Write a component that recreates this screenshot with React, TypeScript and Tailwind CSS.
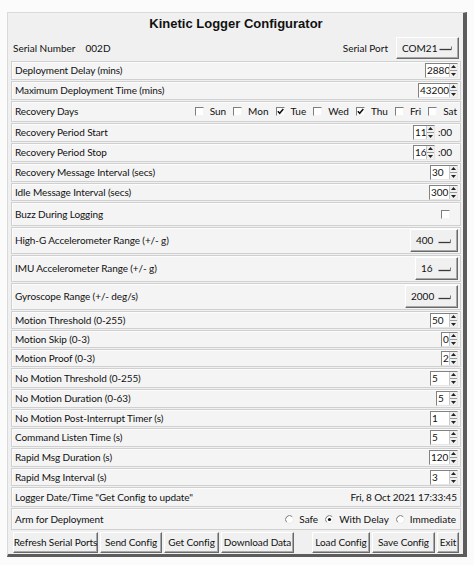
import React from 'react'

const font = { fontFamily: 'Lato, "Noto Sans", sans-serif' }

function Spin({ value, w, suffix }: { value: string; w: string; suffix?: boolean }) {
  return (
    <div className="flex items-center">
      <div className="flex h-[15px] items-stretch bg-white border border-t-[#828282] border-l-[#828282] border-r-[#e6e6e6] border-b-[#e6e6e6]">
        <span className={`${w} pl-[1px] text-[10px] leading-[13px] text-[#111] overflow-hidden`}>{value}</span>
        <div className="flex w-[8px] flex-col justify-center gap-[1px] bg-[#f0f0f0] border-l border-[#c8c8c8]">
          <svg width="7" height="5" viewBox="0 0 7 5" className="mx-auto">
            <path d="M1 4 L3.5 1 L6 4 Z" fill="#222" />
          </svg>
          <div className="h-px bg-[#9a9a9a]" />
          <svg width="7" height="5" viewBox="0 0 7 5" className="mx-auto">
            <path d="M1 1 L3.5 4 L6 1 Z" fill="#222" />
          </svg>
        </div>
      </div>
      {suffix && <span className="ml-[3px] w-[20px] text-[10px] text-[#111]">:00</span>}
    </div>
  )
}

function Indicator() {
  return (
    <svg width="14" height="6" viewBox="0 0 14 6">
      <path d="M0.5 4.5 H12.5" stroke="#3a3a3a" strokeWidth="1.3" />
      <path d="M12.5 1.5 V4.5" stroke="#7a7a7a" strokeWidth="1" />
    </svg>
  )
}

function OptionBtn({ label, w, h }: { label: string; w: string; h: string }) {
  return (
    <div
      className={`${w} ${h} flex items-center justify-between pl-[5px] pr-[5px] bg-[#f0f0f0] border border-t-white border-l-white border-r-[#6a6a6a] border-b-[#6a6a6a] shadow-[inset_-1px_-1px_0_#a8a8a8] text-[10px] text-[#111]`}
    >
      <span>{label}</span>
      <Indicator />
    </div>
  )
}

function Check({ checked }: { checked?: boolean }) {
  return (
    <div className="relative h-[9px] w-[9px] bg-white border border-t-[#7e7e7e] border-l-[#7e7e7e] border-r-[#f4f4f4] border-b-[#f4f4f4]">
      {checked && (
        <svg width="7" height="7" viewBox="0 0 7 7" className="absolute left-0 top-0">
          <path d="M0.8 3.2 L2.7 5.3 L6.3 1" stroke="#111" strokeWidth="1.5" fill="none" />
        </svg>
      )}
    </div>
  )
}

function Radio({ on }: { on?: boolean }) {
  return (
    <svg width="9" height="9" viewBox="0 0 10 10">
      <circle cx="5" cy="5" r="4.3" fill="#fff" />
      <path d="M1.9 8.1 A4.3 4.3 0 0 1 8.1 1.9" stroke="#7a7a7a" strokeWidth="1.1" fill="none" />
      <path d="M8.1 1.9 A4.3 4.3 0 0 1 1.9 8.1" stroke="#e8e8e8" strokeWidth="1" fill="none" />
      {on && <circle cx="5" cy="5" r="1.8" fill="#111" />}
    </svg>
  )
}

function Row({ label, h, children }: { label: string; h: string; children?: React.ReactNode }) {
  return (
    <div
      className={`${h} flex items-center justify-between border border-[#d0d0d0] bg-[#f4f4f4] shadow-[inset_1px_1px_0_#fcfcfc] pl-[3px] pr-[2px]`}
    >
      <span className="text-[10px] tracking-[-0.1px] text-[#111] whitespace-nowrap">{label}</span>
      {children}
    </div>
  )
}

function Btn({ label, w }: { label: string; w: string }) {
  return (
    <div
      className={`${w} h-[21px] flex items-center justify-center bg-[#f0f0f0] border border-t-white border-l-white border-r-[#6a6a6a] border-b-[#6a6a6a] shadow-[inset_-1px_-1px_0_#a8a8a8] text-[10px] tracking-[-0.1px] text-[#111] whitespace-nowrap`}
    >
      {label}
    </div>
  )
}

const days: [string, boolean][] = [
  ['Sun', false],
  ['Mon', false],
  ['Tue', true],
  ['Wed', false],
  ['Thu', true],
  ['Fri', false],
  ['Sat', false],
]

export default function App() {
  return (
    <div className="min-h-[565px] bg-[#fbfbfb] pt-[12px] pl-[7px]" style={font}>
      <div className="w-[460px] bg-[#f0f0f0] border-l border-t border-[#dadada] border-r-[4px] border-b-[3px] border-r-[#5c5c5c] border-b-[#5c5c5c] pl-[3px] pr-[2px] pb-[1px]">
        <div className="h-[22px] flex items-center justify-center">
          <h1 className="text-[13px] font-bold text-[#111]" style={{ fontFamily: '"Liberation Sans", Arial, sans-serif' }}>
            Kinetic Logger Configurator
          </h1>
        </div>

        <div className="h-[26px] flex items-center justify-between pl-[2px] pr-[2px]">
          <div className="flex items-center gap-[10px] text-[10px] text-[#111]">
            <span>Serial Number</span>
            <span>002D</span>
          </div>
          <div className="flex items-center gap-[8px] text-[10px] text-[#111]">
            <span>Serial Port</span>
            <OptionBtn label="COM21" w="w-[63px]" h="h-[22px]" />
          </div>
        </div>

        <div className="flex flex-col gap-px">
          <Row label="Deployment Delay (mins)" h="h-[19px]">
            <Spin value="2880" w="w-[23px]" />
          </Row>
          <Row label="Maximum Deployment Time (mins)" h="h-[19px]">
            <Spin value="43200" w="w-[30px]" />
          </Row>
          <Row label="Recovery Days" h="h-[21px]">
            <div className="flex items-center text-[10px] text-[#111] mr-[1px]">
              {days.map(([d, c]) => (
                <div key={d} className="flex items-center gap-[6px] ml-[7px]">
                  <Check checked={c} />
                  <span>{d}</span>
                </div>
              ))}
            </div>
          </Row>
          <Row label="Recovery Period Start" h="h-[19px]">
            <Spin value="11" w="w-[12px]" suffix />
          </Row>
          <Row label="Recovery Period Stop" h="h-[19px]">
            <Spin value="16" w="w-[12px]" suffix />
          </Row>
          <Row label="Recovery Message Interval (secs)" h="h-[19px]">
            <Spin value="30" w="w-[18px]" />
          </Row>
          <Row label="Idle Message Interval (secs)" h="h-[18px]">
            <Spin value="300" w="w-[19px]" />
          </Row>
          <Row label="Buzz During Logging" h="h-[24px]">
            <div className="mr-[8px]">
              <Check />
            </div>
          </Row>
          <Row label="High-G Accelerometer Range (+/- g)" h="h-[27px]">
            <OptionBtn label="400" w="w-[48px]" h="h-[23px]" />
          </Row>
          <Row label="IMU Accelerometer Range (+/- g)" h="h-[27px]">
            <OptionBtn label="16" w="w-[43px]" h="h-[23px]" />
          </Row>
          <Row label="Gyroscope Range (+/- deg/s)" h="h-[27px]">
            <OptionBtn label="2000" w="w-[53px]" h="h-[23px]" />
          </Row>
          <Row label="Motion Threshold (0-255)" h="h-[18px]">
            <Spin value="50" w="w-[18px]" />
          </Row>
          <Row label="Motion Skip (0-3)" h="h-[18px]">
            <Spin value="0" w="w-[7px]" />
          </Row>
          <Row label="Motion Proof (0-3)" h="h-[18px]">
            <Spin value="2" w="w-[7px]" />
          </Row>
          <Row label="No Motion Threshold (0-255)" h="h-[20px]">
            <Spin value="5" w="w-[18px]" />
          </Row>
          <Row label="No Motion Duration (0-63)" h="h-[19px]">
            <Spin value="5" w="w-[12px]" />
          </Row>
          <Row label="No Motion Post-Interrupt Timer (s)" h="h-[18px]">
            <Spin value="1" w="w-[18px]" />
          </Row>
          <Row label="Command Listen Time (s)" h="h-[19px]">
            <Spin value="5" w="w-[18px]" />
          </Row>
          <Row label="Rapid Msg Duration (s)" h="h-[19px]">
            <Spin value="120" w="w-[19px]" />
          </Row>
          <Row label="Rapid Msg Interval (s)" h="h-[18px]">
            <Spin value="3" w="w-[18px]" />
          </Row>
          <Row label={'Logger Date/Time "Get Config to update"'} h="h-[20px]">
            <span className="text-[10px] tracking-[-0.1px] text-[#111] mr-[1px]">Fri, 8 Oct 2021 17:33:45</span>
          </Row>
          <Row label="Arm for Deployment" h="h-[22px]">
            <div className="flex items-center text-[10px] text-[#111] mr-[2px]">
              <div className="flex items-center gap-[5px]">
                <Radio />
                <span>Safe</span>
              </div>
              <div className="flex items-center gap-[5px] ml-[7px]">
                <Radio on />
                <span>With Delay</span>
              </div>
              <div className="flex items-center gap-[5px] ml-[7px]">
                <Radio />
                <span>Immediate</span>
              </div>
            </div>
          </Row>
        </div>

        <div className="mt-[2px] flex items-center pl-[2px] pr-[2px]">
          <div className="flex gap-[2px]">
            <Btn label="Refresh Serial Ports" w="w-[85px]" />
            <Btn label="Send Config" w="w-[62px]" />
            <Btn label="Get Config" w="w-[55px]" />
            <Btn label="Download Data" w="w-[73px]" />
          </div>
          <div className="ml-auto flex gap-[2px]">
            <Btn label="Load Config" w="w-[58px]" />
            <Btn label="Save Config" w="w-[63px]" />
            <Btn label="Exit" w="w-[22px]" />
          </div>
        </div>
      </div>
    </div>
  )
}
